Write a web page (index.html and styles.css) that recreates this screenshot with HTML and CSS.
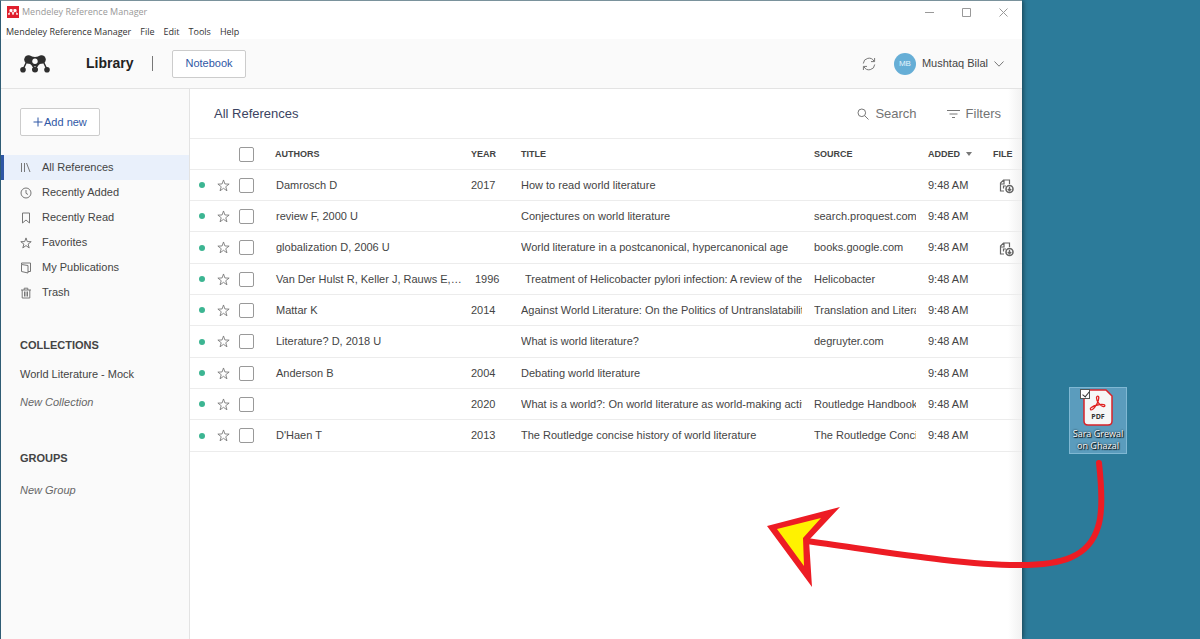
FILE: index.html
```html
<!DOCTYPE html>
<html lang="en">

<head>
  <meta charset="utf-8">
  <title>Mendeley Reference Manager</title>
  <link rel="stylesheet" href="styles.css">
</head>

<body>
  <!-- shared icons -->
  <svg class="sprite" width="0" height="0">
    <symbol id="star" viewBox="0 0 12 12">
      <path d="M6 .9 7.3 4.6 11.2 4.7 8.1 7.1 9.2 10.9 6 8.6 2.8 10.9 3.9 7.1 .8 4.7 4.7 4.6Z" />
    </symbol>
    <symbol id="logo" viewBox="0 0 30 18">
      <path d="M7 6 3 14.500M10 6l5 8.500M20 6l-5 8.500M23 6l4 8.500" fill="none" stroke="currentColor" stroke-width="1.500" />
      <path d="M8.500 .8Q15 3 21.500 .8V8L17 11H13L8.500 8z" fill="currentColor" />
      <g fill="currentColor">
        <circle cx="8.500" cy="4.500" r="4.300" />
        <circle cx="21.500" cy="4.500" r="4.300" />
        <circle cx="3" cy="14.800" r="2.800" />
        <circle cx="15" cy="14.500" r="3" />
        <circle cx="27" cy="14.800" r="2.800" />
      </g>
      <circle cx="15" cy="6.300" r="2.700" fill="var(--logo-gap)" />
      <path d="M9.500 10l3 3M20.500 10l-3 3" fill="none" stroke="var(--logo-gap)" stroke-width="1" />
    </symbol>
    <symbol id="download" viewBox="0 0 15 15">
      <path d="M5 12H1.500V4L4.500 1H10.500V5M1.500 5H5V1M4.500 9.500V7H7" fill="none" stroke="currentColor" stroke-width="1.200" />
      <circle cx="10.500" cy="10" r="3.500" fill="#fff" stroke="currentColor" stroke-width="1.600" />
      <path d="M10.500 7.800v3.600M8.800 10l1.700 1.800L12.200 10" fill="none" stroke="currentColor" stroke-width="1.300" />
    </symbol>
  </svg>

  <div class="desktop">
    <div class="window">
      <div class="titlebar">
        <span class="app-icon"><svg width="10" height="6"><use href="#logo" /></svg></span>
        <span class="app-name">Mendeley Reference Manager</span>
        <button class="win-btn" aria-label="Minimize"><svg width="9" height="9"><path d="M0 4.500h9" /></svg></button>
        <button class="win-btn" aria-label="Maximize"><svg width="9" height="9"><path d="M.5.500h8v8h-8z" /></svg></button>
        <button class="win-btn" aria-label="Close"><svg width="9" height="9"><path d="M.5.500l8 8M8.500.500l-8 8" /></svg></button>
      </div>
      <nav class="menubar">
        <a href="#">Mendeley Reference Manager</a>
        <a href="#">File</a>
        <a href="#">Edit</a>
        <a href="#">Tools</a>
        <a href="#">Help</a>
      </nav>

      <header class="header">
        <svg class="logo" width="30" height="18"><use href="#logo" /></svg>
        <a class="library" href="#">Library</a>
        <button class="btn">Notebook</button>
        <button class="sync" aria-label="Sync">
          <svg width="14" height="14" viewBox="0 0 14 14">
            <path d="M1.300 6.500A5.700 5.700 0 0 1 12 4.200M12.600 1v3.600H9M12.700 7.500A5.700 5.700 0 0 1 2 9.800M1.400 13V9.400H5" />
          </svg>
        </button>
        <button class="user">
          <span class="avatar">MB</span>
          Mushtaq Bilal
          <svg width="10" height="6"><path d="M.5.500 5 5.200 9.500.500" /></svg>
        </button>
      </header>

      <div class="body">
        <aside class="sidebar">
          <button class="btn add"><svg width="10" height="10"><path d="M5 .5v9M.5 5h9" /></svg>Add new</button>
          <nav class="nav">
            <a class="active" href="#"><svg viewBox="0 0 12 12"><path d="M1.500 1v9M4.500 1v9M6.500 1l3.500 9" /></svg>All References</a>
            <a href="#"><svg viewBox="0 0 12 12"><circle cx="6" cy="6" r="5" /><path d="M6 3v3.300l2 1.200" /></svg>Recently Added</a>
            <a href="#"><svg viewBox="0 0 12 12"><path d="M2.500 1h7v10L6 8l-3.500 3z" /></svg>Recently Read</a>
            <a href="#"><svg><use href="#star" /></svg>Favorites</a>
            <a href="#"><svg viewBox="0 0 12 12"><path d="M1.500 2.500 8 3.500V11L1.500 9.500zM1.500 2.500V1h9v8.500H8" /></svg>My Publications</a>
            <a href="#"><svg viewBox="0 0 12 12"><path d="M1 3h10M4.200 3V1.200h3.600V3M2.200 3v8h7.600V3M4.500 4.500v5M6 4.500v5M7.500 4.500v5" /></svg>Trash</a>
          </nav>
          <h2>Collections</h2>
          <a class="collection" href="#">World Literature - Mock</a>
          <a class="new" href="#">New Collection</a>
          <h2>Groups</h2>
          <a class="new new-group" href="#">New Group</a>
        </aside>

        <main class="main">
          <div class="toolbar">
            <h1>All References</h1>
            <button class="tool"><svg width="12" height="12"><circle cx="4.800" cy="4.800" r="3.800" /><path d="M7.500 7.500l4 4" /></svg>Search</button>
            <button class="tool"><svg width="13" height="10"><path d="M0 1.500h13M2.500 5h8M5 8.500h3" /></svg>Filters</button>
          </div>

          <table class="refs">
            <colgroup>
              <col class="c-dot"><col class="c-star"><col class="c-check"><col class="c-authors"><col class="c-year"><col><col class="c-source"><col class="c-added"><col class="c-file">
            </colgroup>
            <thead>
              <tr>
                <th></th>
                <th></th>
                <th><input type="checkbox" aria-label="Select all"></th>
                <th>Authors</th>
                <th>Year</th>
                <th>Title</th>
                <th>Source</th>
                <th>Added <span class="sort"></span></th>
                <th>File</th>
              </tr>
            </thead>
            <tbody>
              <tr>
                <td><i class="dot"></i></td>
                <td><button class="star" aria-label="Favorite"><svg width="13" height="13"><use href="#star" /></svg></button></td>
                <td><input type="checkbox" aria-label="Select"></td>
                <td>Damrosch D</td>
                <td>2017</td>
                <td><div class="clip">How to read world literature</div></td>
                <td></td>
                <td>9:48 AM</td>
                <td><button class="get" aria-label="Download"><svg width="15" height="15"><use href="#download" /></svg></button></td>
              </tr>
              <tr>
                <td><i class="dot"></i></td>
                <td><button class="star" aria-label="Favorite"><svg width="13" height="13"><use href="#star" /></svg></button></td>
                <td><input type="checkbox" aria-label="Select"></td>
                <td>review F, 2000 U</td>
                <td></td>
                <td><div class="clip">Conjectures on world literature</div></td>
                <td><div class="clip">search.proquest.com</div></td>
                <td>9:48 AM</td>
                <td></td>
              </tr>
              <tr>
                <td><i class="dot"></i></td>
                <td><button class="star" aria-label="Favorite"><svg width="13" height="13"><use href="#star" /></svg></button></td>
                <td><input type="checkbox" aria-label="Select"></td>
                <td>globalization D, 2006 U</td>
                <td></td>
                <td><div class="clip">World literature in a postcanonical, hypercanonical age</div></td>
                <td><div class="clip">books.google.com</div></td>
                <td>9:48 AM</td>
                <td><button class="get" aria-label="Download"><svg width="15" height="15"><use href="#download" /></svg></button></td>
              </tr>
              <tr class="long">
                <td><i class="dot"></i></td>
                <td><button class="star" aria-label="Favorite"><svg width="13" height="13"><use href="#star" /></svg></button></td>
                <td><input type="checkbox" aria-label="Select"></td>
                <td>Van Der Hulst R, Keller J, Rauws E,…</td>
                <td>1996</td>
                <td><div class="clip">Treatment of Helicobacter pylori infection: A review of the</div></td>
                <td><div class="clip">Helicobacter</div></td>
                <td>9:48 AM</td>
                <td></td>
              </tr>
              <tr>
                <td><i class="dot"></i></td>
                <td><button class="star" aria-label="Favorite"><svg width="13" height="13"><use href="#star" /></svg></button></td>
                <td><input type="checkbox" aria-label="Select"></td>
                <td>Mattar K</td>
                <td>2014</td>
                <td><div class="clip">Against World Literature: On the Politics of Untranslatabilit</div></td>
                <td><div class="clip">Translation and Litera</div></td>
                <td>9:48 AM</td>
                <td></td>
              </tr>
              <tr>
                <td><i class="dot"></i></td>
                <td><button class="star" aria-label="Favorite"><svg width="13" height="13"><use href="#star" /></svg></button></td>
                <td><input type="checkbox" aria-label="Select"></td>
                <td>Literature? D, 2018 U</td>
                <td></td>
                <td><div class="clip">What is world literature?</div></td>
                <td><div class="clip">degruyter.com</div></td>
                <td>9:48 AM</td>
                <td></td>
              </tr>
              <tr>
                <td><i class="dot"></i></td>
                <td><button class="star" aria-label="Favorite"><svg width="13" height="13"><use href="#star" /></svg></button></td>
                <td><input type="checkbox" aria-label="Select"></td>
                <td>Anderson B</td>
                <td>2004</td>
                <td><div class="clip">Debating world literature</div></td>
                <td></td>
                <td>9:48 AM</td>
                <td></td>
              </tr>
              <tr>
                <td><i class="dot"></i></td>
                <td><button class="star" aria-label="Favorite"><svg width="13" height="13"><use href="#star" /></svg></button></td>
                <td><input type="checkbox" aria-label="Select"></td>
                <td></td>
                <td>2020</td>
                <td><div class="clip">What is a world?: On world literature as world-making activ</div></td>
                <td><div class="clip">Routledge Handbook</div></td>
                <td>9:48 AM</td>
                <td></td>
              </tr>
              <tr>
                <td><i class="dot"></i></td>
                <td><button class="star" aria-label="Favorite"><svg width="13" height="13"><use href="#star" /></svg></button></td>
                <td><input type="checkbox" aria-label="Select"></td>
                <td>D'Haen T</td>
                <td>2013</td>
                <td><div class="clip">The Routledge concise history of world literature</div></td>
                <td><div class="clip">The Routledge Conci</div></td>
                <td>9:48 AM</td>
                <td></td>
              </tr>
            </tbody>
          </table>
        </main>
      </div>
    </div>

    <a class="shortcut" href="#">
      <input type="checkbox" checked aria-label="Select file">
      <svg width="30" height="37" viewBox="0 0 30 37">
        <path d="M4 1h19l6 6v25q0 4-4 4H5q-4 0-4-4V4q0-3 3-3z" fill="#f6f6f6" stroke="#d8232a" stroke-width="1.500" />
        <path d="M13.500 9c0-2.500 2.500-2.500 2.300 0-.2 3.500-3.300 9.500-6.300 11.500-2 1-3-.8-1.200-2 3-2 9-3.700 12.400-2.900 2 .6 1.200 2.500-.8 1.900C17 16.500 13.600 12.500 13.500 9z" fill="none" stroke="#e02020" stroke-width="1.300" />
        <text x="15" y="30" text-anchor="middle">PDF</text>
      </svg>
      <span>Sara Grewal<br>on Ghazal</span>
    </a>

    <!-- drag direction -->
    <svg class="arrow" width="350" height="135" viewBox="760 455 350 135">
      <path d="M1099 463C1102 490 1103 512 1098 527 1089 557 1062 565 1020 565 960 565 880 551 806 541" fill="none" stroke="#ed1c24" stroke-width="6" stroke-linecap="round" />
      <path d="M767 526 840 507 809 540 812 587z" fill="#ed1c24" />
      <path d="M777 529 821 518 803 538 804 566z" fill="#fff200" />
    </svg>
  </div>
</body>

</html>
```

FILE: styles.css
```css
* { box-sizing: border-box; }

body {
  margin: 0;
  font: 11px/15px "Liberation Sans", Arial, sans-serif;
  color: #444;
}

a { color: inherit; text-decoration: none; }
button { margin: 0; padding: 0; border: 0; background: none; font: inherit; color: inherit; }
h1, h2 { margin: 0; }
svg { display: block; flex: none; fill: none; stroke: #777; }
.sprite { position: absolute; }

.desktop {
  position: relative;
  display: flex;
  align-items: flex-start;
  min-height: 100vh;
  background: #2c7b9a;
  overflow: hidden;
}

/* application window */
.window {
  flex: 1;
  min-width: 0;
  min-height: 100vh;
  display: flex;
  flex-direction: column;
  border-top: 1px solid #7a929c;
  border-left: 1px solid #2f5c74;
  background: #fff;
  box-shadow: 1px 0 5px rgba(0, 0, 0, .5);
}

.titlebar {
  display: flex;
  align-items: center;
  height: 22px;
  padding: 0 14px 0 6px;
  font: 9px/12px "Open Sans", "Noto Sans", sans-serif;
  color: #999;
}
.app-icon { display: grid; place-items: center; width: 12px; height: 12px; margin-right: 3px; background: #e01f2d; color: #fff; --logo-gap: #e01f2d; }
.app-icon svg, .logo { stroke: none; }
.app-name { margin-right: auto; }
.win-btn { margin-left: 28px; }
.win-btn svg { stroke: #999; }

.menubar {
  display: flex;
  gap: 9px;
  height: 16px;
  padding: 2px 5px;
  font: 9px/13px "Open Sans", "Noto Sans", sans-serif;
  color: #333;
}

.header {
  display: flex;
  align-items: center;
  height: 50px;
  padding: 0 18px 0 19px;
  border-bottom: 1px solid #e3e3e3;
  background: #fafafa;
}
.logo { color: #2e2e2e; --logo-gap: #fafafa; }
.library {
  margin: 0 19px 0 36px;
  padding-right: 19px;
  border-right: 1px solid #777;
  font-size: 14px;
  font-weight: bold;
  color: #222;
}
.btn {
  height: 28px;
  padding: 0 12px;
  border: 1px solid #ccc;
  border-radius: 2px;
  background: #fff;
  color: #2f57a5;
}
.sync { margin-left: auto; }
.user { display: flex; align-items: center; gap: 6px; margin-left: 18px; }
.avatar {
  width: 22px;
  border-radius: 50%;
  background: #66aed6;
  font-size: 8px;
  line-height: 22px;
  text-align: center;
  color: #e4f3fb;
}

.body { flex: 1; display: flex; }

/* sidebar */
.sidebar {
  flex: none;
  width: 189px;
  padding-top: 19px;
  border-right: 1px solid #e3e3e3;
  background: #fafafa;
}
.add { display: flex; align-items: center; gap: 1px; margin: 0 0 19px 19px; }
.add svg { stroke: #2f57a5; }
.nav { margin-bottom: 33px; }
.nav a {
  display: flex;
  align-items: center;
  gap: 10px;
  height: 25px;
  padding-left: 16px;
  border-left: 3px solid transparent;
}
.nav svg { width: 12px; height: 12px; }
.nav .active { border-color: #2f57a5; background: #e9f0fb; }
.sidebar h2 { padding-left: 19px; font-size: 11px; text-transform: uppercase; }
.collection, .new { display: block; padding-left: 19px; }
.collection { margin: 14px 0 13px; }
.new { margin-bottom: 41px; font-style: italic; color: #666; }
.new-group { margin-top: 17px; }

/* reference list */
.main { flex: 1; min-width: 0; background: linear-gradient(to left, #f1f1f1, #fff 14px); }
.toolbar {
  display: flex;
  align-items: center;
  gap: 30px;
  height: 50px;
  padding: 0 21px 0 24px;
  border-bottom: 1px solid #ececec;
}
.toolbar h1 { margin-right: auto; font-size: 13px; font-weight: normal; color: #3b4361; }
.tool { display: flex; align-items: center; gap: 6px; font-size: 13px; color: #737373; }

.refs { width: 100%; table-layout: fixed; border-spacing: 0; }
.c-dot { width: 23px; }
.c-star { width: 26px; }
.c-check { width: 36px; }
.c-authors { width: 196px; }
.c-year { width: 50px; }
.c-source { width: 114px; }
.c-added { width: 65px; }
.c-file { width: 29px; }

th, td {
  height: 31px;
  padding: 0;
  border-bottom: 1px solid #ececec;
  text-align: left;
  white-space: nowrap;
}
tbody tr:nth-child(3n) td { height: 32px; }
th { font-size: 9px; text-transform: uppercase; }
td:nth-child(4) { padding-left: 1px; }
.clip { margin-right: 12px; overflow: hidden; }
.long td:nth-child(5), .long td:nth-child(6) { padding-left: 4px; }

.refs input {
  appearance: none;
  display: block;
  width: 15px;
  height: 15px;
  margin: 0;
  border: 1px solid #999;
  border-radius: 2px;
  background: #fff;
}
.dot { display: block; width: 6px; height: 6px; margin-left: 9px; border-radius: 50%; background: #3cb592; }
.star { display: block; margin-left: 4px; }
.star svg { stroke-width: .8px; }
.sort { display: inline-block; margin-left: 3px; border: 3px solid transparent; border-top: 4px solid #777; border-bottom: 0; vertical-align: middle; }
.get { display: block; margin: 3px 0 0 6px; color: #666; }
.get svg { stroke: none; }

/* file on the desktop */
.shortcut {
  flex: none;
  position: relative;
  width: 58px;
  margin: 387px 73px 0 47px;
  padding-bottom: 1px;
  border: 1px solid #80b8d3;
  background: #5b9cbd;
  font: 9px/12px "Open Sans", "Noto Sans", sans-serif;
  text-align: center;
  color: #fff;
  text-shadow: 1px 1px 1px #000, 0 0 2px #000;
}
.shortcut svg { margin: 1px auto 2px; }
.shortcut text { font-size: 7px; font-weight: bold; fill: #333; stroke: none; text-shadow: none; }
.shortcut input { position: absolute; top: 1px; left: 10px; appearance: none; width: 10px; height: 10px; margin: 0; border: 1px solid #555; background: #fff; }
.shortcut input::after { content: ""; display: block; width: 3px; height: 6px; margin-left: 3px; border: solid #333; border-width: 0 1px 1px 0; transform: rotate(40deg); }
.shortcut span { display: block; white-space: nowrap; }

.arrow { position: absolute; top: 455px; right: 90px; stroke: none; }
```
